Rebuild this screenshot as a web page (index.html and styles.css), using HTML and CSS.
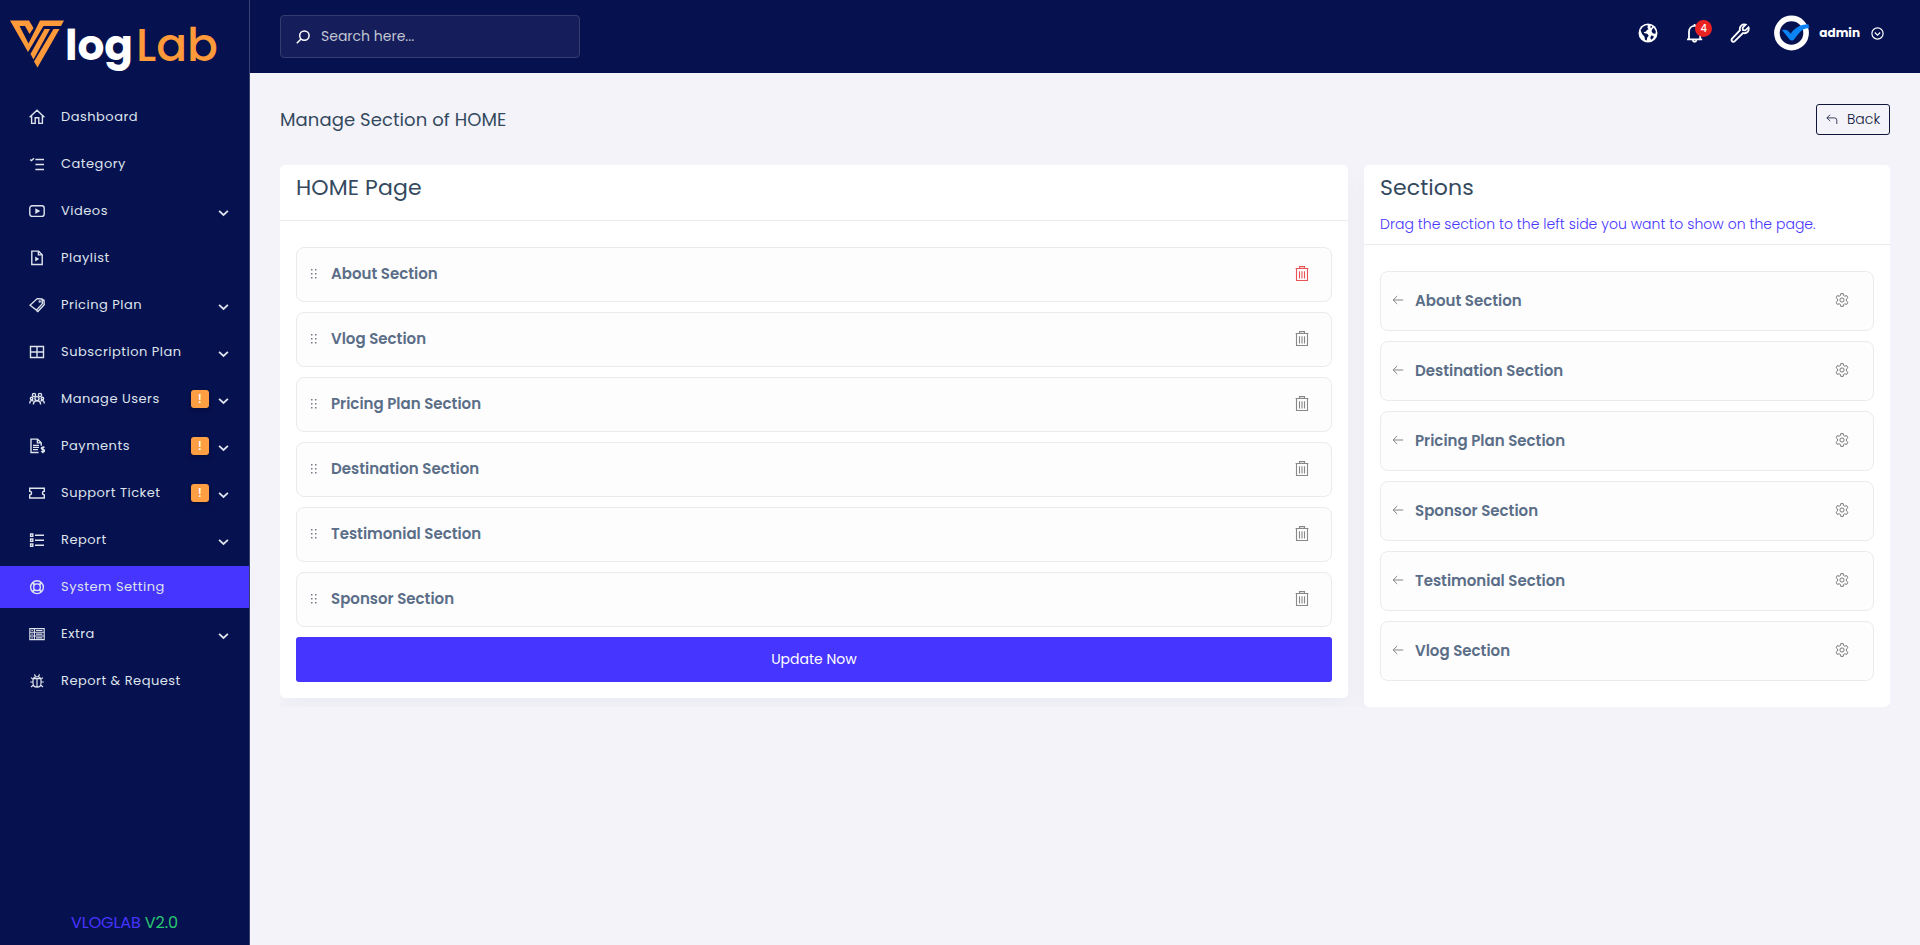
FILE: index.html
```html
<!DOCTYPE html>
<html lang="en">
<head>
  <meta charset="UTF-8">
  <meta name="viewport" content="width=device-width, initial-scale=1.0">
  <title>VlogLab - Manage Section of HOME</title>
  <link rel="stylesheet" href="styles.css">
</head>
<body>

<svg class="sprite" width="0" height="0">
  <symbol id="i-home" viewBox="0 0 16 16"><path d="M.6 8.3 8 1.2l7.4 7.1M2.6 6.8v7.6h3.6V8.8h3.6v5.6h3.6V6.8"/></symbol>
  <symbol id="i-tasks" viewBox="0 0 16 16"><path d="M6.4 3.5H15M6.4 8.5H15M6.4 13.5H15M1.2 3.6l1.3.9L5 2.2"/></symbol>
  <symbol id="i-video" viewBox="0 0 16 16"><rect x=".8" y="2.8" width="14.4" height="10.6" rx="2.4"/><path class="solid" d="M6.3 5.2v5.8l5-2.9z"/></symbol>
  <symbol id="i-file" viewBox="0 0 16 16"><path d="M2.8 1.1h6.8l3.6 3.6v9.8H2.8zM9.4 1.1v3.8h3.8"/><path class="solid" d="M6.2 6.4v5l4-2.5z"/></symbol>
  <symbol id="i-tags" viewBox="0 0 16 16"><path d="M8.2 1.6 13 2l.4 4.6-6 6.5L1 8.2zM13.6 2.6l1.4.7.2 4.4-6.4 6.9-1.2-.9"/><circle cx="10.7" cy="4.5" r=".5"/></symbol>
  <symbol id="i-grid" viewBox="0 0 16 16"><path d="M1.5 2.5h13v11h-13zM8 2.5v11M1.5 8h13"/></symbol>
  <symbol id="i-users" viewBox="0 0 16 16"><circle cx="5" cy="4" r="1.6"/><circle cx="11" cy="4" r="1.6"/><circle cx="8" cy="7.6" r="2"/><circle cx="2.6" cy="7.4" r="1.2"/><circle cx="13.4" cy="7.4" r="1.2"/><path d="M4.4 13.4c0-4.8 7.2-4.8 7.2 0M.7 12.4c0-3 2.4-3.6 3.6-2.3M15.3 12.4c0-3-2.4-3.6-3.6-2.3"/></symbol>
  <symbol id="i-bill" viewBox="0 0 16 16"><path d="M9.6 14.5H2V1.1h6.6l3.6 3.6v3M8.4 1.1v3.8h3.8M4 7.4h6M4 9.4h6M4 11.6h5"/><path d="M15.5 9.6c-1-.9-3.2-.6-3.2.7 0 1.6 3.3.8 3.3 2.4 0 1.4-2.4 1.5-3.4.5M13.9 8.4v6.8"/></symbol>
  <symbol id="i-ticket" viewBox="0 0 16 16"><path d="M.7 3.2h14.6v3.1a1.8 1.8 0 0 0 0 3.6V13H.7V9.9a1.8 1.8 0 0 0 0-3.6z"/></symbol>
  <symbol id="i-list" viewBox="0 0 16 16"><path d="M6 3.2h9M6 8.2h9M6 13.2h9M1.6 2h2.2v2.4H1.6zM1.6 7h2.2v2.4H1.6zM1.6 12h2.2v2.4H1.6z"/></symbol>
  <symbol id="i-ring" viewBox="0 0 16 16"><circle cx="8" cy="8.2" r="6.4"/><circle cx="8" cy="8.2" r="3.3"/><path d="m3.6 3.7 2 2.1M12.4 3.7l-2 2.1M3.6 12.7l2-2.1M12.4 12.7l-2-2.1" stroke-width="2"/></symbol>
  <symbol id="i-server" viewBox="0 0 16 16"><path d="M.8 2.6h14.4v11H.8zM.8 6.2h14.4M.8 10h14.4M5.4 2.6v11M2.4 4.5h1.4M2.4 8.1h1.4M2.4 11.9h1.4M7 4.5h6.4M7 8.1h6.4M7 11.9h6.4" stroke-width="1.1"/></symbol>
  <symbol id="i-bug" viewBox="0 0 16 16"><path d="M4 7.2c0-4.6 8-4.6 8 0v3c0 5.2-8 5.2-8 0zM4.2 5.6h7.6M8 5.6v8.2M5.4 1.4 6.8 4M10.6 1.4 9.2 4M1.2 9H4M12 9h2.8M2 4.6l2.2 1.8M14 4.6l-2.2 1.8M2 14l2.4-2M14 14l-2.4-2" stroke-width="1.2"/></symbol>
  <symbol id="i-down" viewBox="0 0 12 8"><path d="M1.2 1.6 6 6.2l4.8-4.6" stroke-width="2"/></symbol>
  <symbol id="i-grip" viewBox="0 0 8 12"><path class="solid" d="M1 1h1.5v1.5H1zM5 1h1.5v1.5H5zM1 5h1.5v1.5H1zM5 5h1.5v1.5H5zM1 9h1.5v1.5H1zM5 9h1.5v1.5H5z"/></symbol>
  <symbol id="i-trash" viewBox="0 0 14 16"><path d="M.6 2.5h12.8M4.5 2.4V.6h5v1.8M1.5 2.8v11.7h11V2.8M4.5 5.2v7.2M7 5.2v7.2M9.5 5.2v7.2"/></symbol>
  <symbol id="i-left" viewBox="0 0 12 10"><path d="M11.2 5H1.2M5.2 1 1.1 5l4.1 4"/></symbol>
  <symbol id="i-gear" viewBox="0 0 14 14"><path d="m5.4 2.5.4-1.9h2.4l.4 1.9 1.2.7 1.9-.6 1.2 2.1-1.5 1.3v1.9l1.5 1.4-1.2 2.1-1.9-.6-1.2.7-.4 1.9H5.8l-.4-1.9-1.2-.7-1.9.6-1.2-2.1 1.5-1.4V6L1.1 4.7l1.2-2.1 1.9.6z"/><circle cx="7" cy="7" r="2.1"/></symbol>
</svg>

<div class="page">
  <aside class="sidebar">
    <svg class="logo" viewBox="0 0 210 60" width="210" height="60">
      <g fill="#ff9a3a">
        <path d="M0 5.5h19l4.5 7.5-4 6-4.500-8H9.500l9 17.500L30 5.500h24l-3 5.500H33.500L18 37z"/>
        <path d="M34.500 14h5.500L23.500 44.500l-3-5.500zM43.500 14H49.500L27.500 52.500l-3.500-6z"/>
      </g>
      <text class="logo-log" x="55" y="45" textLength="68" lengthAdjust="spacingAndGlyphs">log</text>
      <text class="logo-lab" x="126" y="46" textLength="82" lengthAdjust="spacingAndGlyphs">Lab</text>
    </svg>
    <nav class="menu">
      <a class="menu-item" href="#"><svg><use href="#i-home"/></svg><span>Dashboard</span></a>
      <a class="menu-item" href="#"><svg><use href="#i-tasks"/></svg><span>Category</span></a>
      <a class="menu-item" href="#"><svg><use href="#i-video"/></svg><span>Videos</span><svg class="caret"><use href="#i-down"/></svg></a>
      <a class="menu-item" href="#"><svg><use href="#i-file"/></svg><span>Playlist</span></a>
      <a class="menu-item" href="#"><svg><use href="#i-tags"/></svg><span>Pricing Plan</span><svg class="caret"><use href="#i-down"/></svg></a>
      <a class="menu-item" href="#"><svg><use href="#i-grid"/></svg><span>Subscription Plan</span><svg class="caret"><use href="#i-down"/></svg></a>
      <a class="menu-item" href="#"><svg><use href="#i-users"/></svg><span>Manage Users</span><b class="pill">!</b><svg class="caret"><use href="#i-down"/></svg></a>
      <a class="menu-item" href="#"><svg><use href="#i-bill"/></svg><span>Payments</span><b class="pill">!</b><svg class="caret"><use href="#i-down"/></svg></a>
      <a class="menu-item" href="#"><svg><use href="#i-ticket"/></svg><span>Support Ticket</span><b class="pill">!</b><svg class="caret"><use href="#i-down"/></svg></a>
      <a class="menu-item" href="#"><svg><use href="#i-list"/></svg><span>Report</span><svg class="caret"><use href="#i-down"/></svg></a>
      <a class="menu-item active" href="#"><svg><use href="#i-ring"/></svg><span>System Setting</span></a>
      <a class="menu-item" href="#"><svg><use href="#i-server"/></svg><span>Extra</span><svg class="caret"><use href="#i-down"/></svg></a>
      <a class="menu-item" href="#"><svg><use href="#i-bug"/></svg><span>Report &amp; Request</span></a>
    </nav>
    <div class="version"><span class="text-primary">VLOGLAB</span> <span class="text-success">V2.0</span></div>
  </aside>

  <div class="wrapper">
    <header class="topbar">
      <label class="search">
        <svg width="14" height="14" viewBox="0 0 14 14"><circle cx="8.4" cy="5.6" r="4.7"/><path d="M5 9 .8 13.2"/></svg>
        <input type="search" placeholder="Search here...">
      </label>
      <div class="tools">
        <svg class="globe" width="20" height="20" viewBox="0 0 20 20">
          <circle cx="10" cy="10" r="9.5" fill="#fff"/>
          <path fill="#06114f" d="M2.5 7 5 3.8 8 2.2l2 .3-.6 2.2L10.5 6 8.6 7.4l-.8 1.300-2.200.4 1 1.200 2.700.5 1.400 2-1.400 1.700-.6 3L7 16.800l-.6-3.400L4 11zM14 6.400l1.800-1.600 2 3.400-.3 2.600-2.300-.4-1.600-1.600zM13.200 12.400l2.500.5-.3 2-2.300 1.800-.8-2zM12.800 2.600l1.500.8-1 1.600-1-.6z"/>
        </svg>
        <span class="bell">
          <svg width="18" height="20" viewBox="0 0 18 20"><path d="M1 16.3h15.2M3 16V8.800C3 .8 14.200.8 14.200 8.800V16M8.600 2.700V1M6.800 17c.2 2.300 3.400 2.300 3.600 0"/></svg>
          <b class="count">4</b>
        </span>
        <svg class="wrench" width="20" height="20" viewBox="0 0 20 20"><path d="M15.7 1.6 12.6 4.7l.4 2.4 2.3.3 3.2-3c1.100 3.200-1.500 6.700-5.500 5.600L4.800 18.200c-1.900 1.700-4.300-.7-2.700-2.600L10 7.200c-1-3.800 2.300-6.700 5.700-5.600z"/></svg>
        <div class="profile">
          <svg class="avatar" width="36" height="36" viewBox="0 0 36 36">
            <circle cx="17.5" cy="18" r="14.6" fill="none" stroke="#fff" stroke-width="5.6"/>
            <path fill="#0a84f5" d="M8 15q4-.5 6 .7l2.600 3c3.400-4.500 8.500-9.500 17.800-9.500l.8 3.800q-3.500 0-6 1.500-4 2.500-9.500 10.500-2.500 1.500-4.500-1.100z"/>
          </svg>
          <span class="name">admin</span>
          <svg width="13" height="13" viewBox="0 0 13 13"><circle cx="6.5" cy="6.5" r="5.6"/><path d="m3.8 5.5 2.700 2.700 2.700-2.700"/></svg>
        </div>
      </div>
    </header>

    <main class="content">
      <div class="heading">
        <h6 class="page-title">Manage Section of HOME</h6>
        <a class="btn-back" href="#"><svg width="12" height="11" viewBox="0 0 12 11"><path d="M4.200.8.800 3.900 4.200 7M1 3.900h7.500q2.300 0 2.300 2.300V10"/></svg>Back</a>
      </div>

      <div class="row">
        <section class="card card-page">
          <div class="card-header"><h3>HOME Page</h3></div>
          <div class="card-body">
            <ul class="list">
              <li><svg class="grip"><use href="#i-grip"/></svg><span>About Section</span><svg class="trash danger"><use href="#i-trash"/></svg></li>
              <li><svg class="grip"><use href="#i-grip"/></svg><span>Vlog Section</span><svg class="trash"><use href="#i-trash"/></svg></li>
              <li><svg class="grip"><use href="#i-grip"/></svg><span>Pricing Plan Section</span><svg class="trash"><use href="#i-trash"/></svg></li>
              <li><svg class="grip"><use href="#i-grip"/></svg><span>Destination Section</span><svg class="trash"><use href="#i-trash"/></svg></li>
              <li><svg class="grip"><use href="#i-grip"/></svg><span>Testimonial Section</span><svg class="trash"><use href="#i-trash"/></svg></li>
              <li><svg class="grip"><use href="#i-grip"/></svg><span>Sponsor Section</span><svg class="trash"><use href="#i-trash"/></svg></li>
            </ul>
            <button class="btn-update" type="submit">Update Now</button>
          </div>
        </section>

        <section class="card card-sections">
          <div class="card-header">
            <h3>Sections</h3>
            <p>Drag the section to the left side you want to show on the page.</p>
          </div>
          <div class="card-body">
            <ul class="list">
              <li><svg class="arrow"><use href="#i-left"/></svg><span>About Section</span><svg class="gear"><use href="#i-gear"/></svg></li>
              <li><svg class="arrow"><use href="#i-left"/></svg><span>Destination Section</span><svg class="gear"><use href="#i-gear"/></svg></li>
              <li><svg class="arrow"><use href="#i-left"/></svg><span>Pricing Plan Section</span><svg class="gear"><use href="#i-gear"/></svg></li>
              <li><svg class="arrow"><use href="#i-left"/></svg><span>Sponsor Section</span><svg class="gear"><use href="#i-gear"/></svg></li>
              <li><svg class="arrow"><use href="#i-left"/></svg><span>Testimonial Section</span><svg class="gear"><use href="#i-gear"/></svg></li>
              <li><svg class="arrow"><use href="#i-left"/></svg><span>Vlog Section</span><svg class="gear"><use href="#i-gear"/></svg></li>
            </ul>
          </div>
        </section>
      </div>
    </main>
  </div>
</div>

</body>
</html>
```

FILE: styles.css
```css
:root {
  --navy: #06114f;
  --primary: #4634ff;
  --warning: #ff9f43;
  --success: #28c76f;
  --danger: #ea5455;
  --heading: #34495e;
  --text: #5b6e88;
  --border: #ebebeb;
}

* {
  margin: 0;
  padding: 0;
  box-sizing: border-box;
}

body {
  font-family: Poppins, Inter, "Open Sans", sans-serif;
  font-size: 14px;
  background: #f3f3f9;
  color: var(--text);
}

a {
  text-decoration: none;
}

svg {
  display: block;
  flex: none;
  fill: none;
  stroke: currentColor;
  stroke-width: 1.2;
}

.solid {
  fill: currentColor;
  stroke: none;
}

.sprite {
  position: absolute;
}

.page {
  display: flex;
  height: 100vh;
}

/* sidebar */
.sidebar {
  display: flex;
  flex-direction: column;
  width: 250px;
  padding-top: 15px;
  background: var(--navy);
  border-right: 1px solid #3a4270;
}

.logo {
  margin-left: 10px;
  overflow: visible;
  stroke: none;
}

.logo-log {
  font-size: 43px;
  font-weight: 700;
  fill: #fff;
}

.logo-lab {
  font-size: 46px;
  font-weight: 500;
  fill: #ff9a3a;
}

.menu {
  display: flex;
  flex-direction: column;
  gap: 5px;
  margin-top: 21px;
}

.menu-item {
  display: flex;
  align-items: center;
  height: 42px;
  padding: 0 20px 0 29px;
  font-size: 13px;
  letter-spacing: .5px;
  color: #dee4ec;
}

.menu-item svg {
  width: 16px;
  height: 16px;
  stroke-width: 1.4;
}

.menu-item span {
  flex: 1;
  margin-left: 16px;
  white-space: nowrap;
}

.menu-item.active {
  background: var(--primary);
}

.menu-item .caret {
  width: 11px;
  height: 8px;
  margin-top: 4px;
}

.pill {
  width: 18px;
  height: 18px;
  margin-right: 9px;
  border-radius: 3px;
  background: var(--warning);
  color: #fff;
  font-size: 13px;
  font-weight: 500;
  line-height: 18px;
  text-align: center;
  box-shadow: 0 2px 4px rgba(0, 0, 0, .3);
}

.version {
  margin-top: auto;
  padding-bottom: 12px;
  font-size: 16px;
  font-weight: 400;
  line-height: 20px;
  letter-spacing: -.1px;
  text-align: center;
}

.text-primary {
  color: var(--primary);
}

.text-success {
  color: var(--success);
}

/* topbar */
.wrapper {
  flex: 1;
  display: flex;
  flex-direction: column;
}

.topbar {
  display: flex;
  justify-content: space-between;
  height: 73px;
  padding: 15px 36px 15px 30px;
  background: var(--navy);
  color: #fff;
}

.search {
  display: flex;
  align-items: center;
  gap: 11px;
  width: 300px;
  height: 43px;
  padding: 0 15px;
  border: 1px solid #343c70;
  border-radius: 4px;
  background: #151e5a;
}

.search svg {
  stroke-width: 1.5;
}

.search input {
  flex: 1;
  border: 0;
  outline: 0;
  background: none;
  font: inherit;
  color: #fff;
}

.search input::placeholder {
  color: #c2c5d3;
}

.tools {
  display: flex;
  align-items: center;
  height: 36px;
}

.globe {
  margin-right: 28px;
  stroke: none;
}

.bell {
  position: relative;
  margin-right: 26px;
}

.bell svg,
.wrench {
  stroke-width: 1.8;
}

.count {
  position: absolute;
  top: -3px;
  left: 9px;
  width: 17px;
  height: 17px;
  border-radius: 50%;
  background: #eb2222;
  font-size: 10px;
  font-weight: 500;
  line-height: 17px;
  text-align: center;
}

.profile {
  display: flex;
  align-items: center;
  margin-left: 24px;
}

.avatar {
  stroke: none;
}

.name {
  margin: 0 11px 0 9px;
  font-size: 12px;
  font-weight: 700;
}

/* content */
.content {
  padding: 30px;
}

.heading {
  display: flex;
  justify-content: space-between;
  align-items: flex-end;
  height: 32px;
  margin-bottom: 30px;
}

.page-title {
  font-size: 18px;
  font-weight: 400;
  line-height: 30px;
  letter-spacing: .08px;
  color: var(--heading);
}

.btn-back {
  display: flex;
  align-items: center;
  gap: 9px;
  width: 74px;
  height: 31px;
  padding-left: 9px;
  border: 1px solid #10163a;
  border-radius: 3px;
  font-weight: 300;
  color: #10163a;
}

.btn-back svg {
  stroke-width: .8;
}

/* clips the card shadows to the row */
.row {
  display: flex;
  align-items: flex-start;
  gap: 16px;
  overflow: hidden;
}

.card {
  background: #fff;
  border-radius: 5px;
  box-shadow: 0 12px 24px rgba(18, 38, 63, .03);
}

.card-page {
  width: 1068px;
}

.card-sections {
  flex: 1;
}

.card-header {
  padding: 8px 16px;
  border-bottom: 1px solid var(--border);
}

.card-page .card-header {
  height: 56px;
}

.card-sections .card-header {
  height: 80px;
}

.card-header h3 {
  font-size: 22px;
  font-weight: 400;
  line-height: 29px;
  letter-spacing: .1px;
  color: var(--heading);
}

.card-header p {
  margin-top: 11px;
  font-weight: 300;
  line-height: 22px;
  letter-spacing: .03px;
  white-space: nowrap;
  color: var(--primary);
}

.card-body {
  padding: 26px 16px 16px;
}

.list {
  list-style: none;
}

.list li {
  display: flex;
  align-items: center;
  height: 55px;
  margin-bottom: 10px;
  padding-bottom: 2px;
  border: 1px solid var(--border);
  border-radius: 8px;
  background: #fdfdfd;
}

.card-sections .list li {
  height: 60px;
}

.list span {
  flex: 1;
  font-size: 15px;
  font-weight: 600;
}

.grip {
  width: 8px;
  height: 12px;
  margin: 0 13px;
  color: #74788a;
}

.trash {
  width: 14px;
  height: 16px;
  margin-right: 22px;
  stroke-width: 1.1;
  color: #888;
}

.trash.danger {
  color: var(--danger);
}

.arrow {
  width: 12px;
  height: 10px;
  margin: 0 11px;
  stroke-width: .9;
  color: #777;
}

.gear {
  width: 14px;
  height: 14px;
  margin-right: 24px;
  stroke-width: 1;
  color: #777;
}

.btn-update {
  display: block;
  width: 100%;
  height: 45px;
  border: 0;
  border-radius: 3px;
  background: var(--primary);
  color: #fff;
  font: inherit;
}
```
